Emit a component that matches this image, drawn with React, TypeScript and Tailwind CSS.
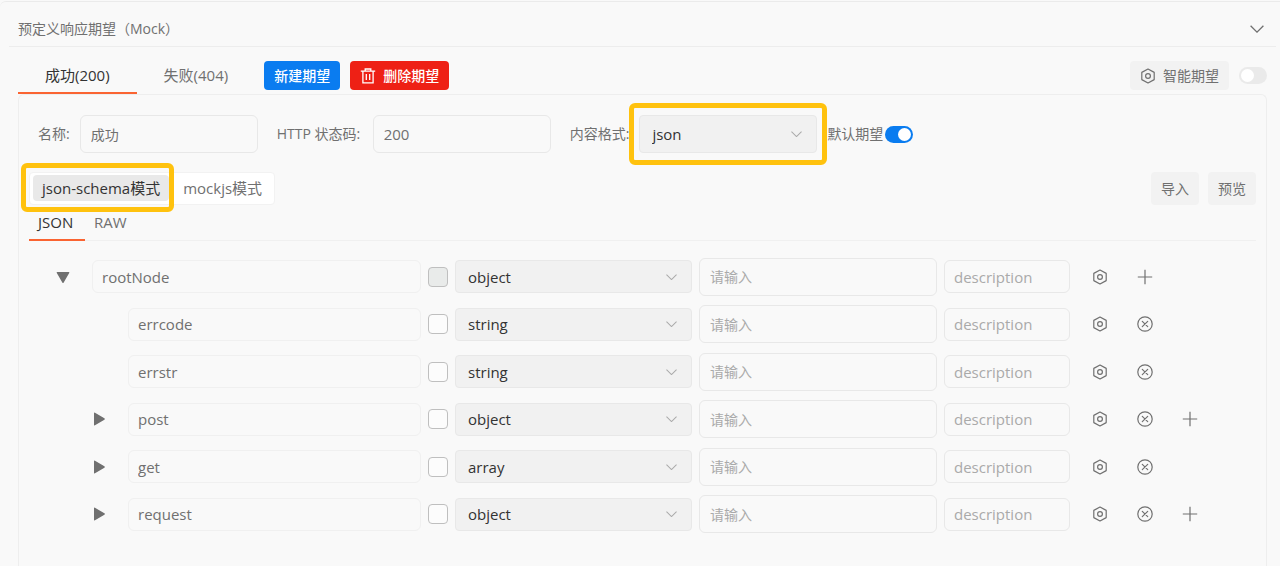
import { useState, type ReactNode } from "react";
import { clsx } from "clsx";

type SchemaNode = {
  name: string;
  type: string;
  level: 0 | 1;
  expand?: "open" | "closed";
  canRemove: boolean;
  canAdd: boolean;
};

const NODES: SchemaNode[] = [
  { name: "rootNode", type: "object", level: 0, expand: "open", canRemove: false, canAdd: true },
  { name: "errcode", type: "string", level: 1, canRemove: true, canAdd: false },
  { name: "errstr", type: "string", level: 1, canRemove: true, canAdd: false },
  { name: "post", type: "object", level: 1, expand: "closed", canRemove: true, canAdd: true },
  { name: "get", type: "array", level: 1, expand: "closed", canRemove: true, canAdd: false },
  { name: "request", type: "object", level: 1, expand: "closed", canRemove: true, canAdd: true },
];

const TYPES = ["object", "array", "string", "number", "boolean", "integer"];

function HexIcon() {
  return (
    <svg width="16" height="16" viewBox="0 0 16 16" fill="none" stroke="currentColor" strokeWidth="1.2" strokeLinejoin="round">
      <path d="M8 1 14.2 4.4V11.6L8 15 1.8 11.6V4.4Z" />
      <circle cx="8" cy="8" r="2.4" />
    </svg>
  );
}

function CloseCircleIcon() {
  return (
    <svg width="16" height="16" viewBox="0 0 16 16" fill="none" stroke="currentColor" strokeWidth="1.2" strokeLinecap="round">
      <circle cx="8" cy="8" r="7.2" />
      <path d="M5.3 5.3 10.7 10.7M10.7 5.3 5.3 10.7" />
    </svg>
  );
}

function PlusIcon() {
  return (
    <svg width="16" height="16" viewBox="0 0 16 16" fill="none" stroke="currentColor" strokeWidth="1.2">
      <path d="M8 .8V15.2M.8 8H15.2" />
    </svg>
  );
}

function TrashIcon() {
  return (
    <svg width="16" height="16" viewBox="0 0 16 16" fill="none" stroke="currentColor" strokeWidth="1.3">
      <path d="M.8 3.2H15.2M2.9 3.2V14.9H13.1V3.2M5.2 3.2V1H10.8V3.2M6.3 6V12M9.7 6V12" />
    </svg>
  );
}

function ChevronIcon({ className }: { className?: string }) {
  return (
    <svg className={className} viewBox="0 0 14 8" fill="none" stroke="currentColor" strokeWidth="1.3">
      <path d="M.6.7 7 7.1 13.4.7" />
    </svg>
  );
}

function Triangle({ open }: { open: boolean }) {
  return (
    <svg width="14" height="14" viewBox="0 0 14 14" className={clsx("fill-current", !open && "-rotate-90")}>
      <path d="M1.3 2H12.7Q13.8 2 13.2 3L7.7 12.4Q7 13.4 6.3 12.4L.8 3Q.2 2 1.3 2Z" />
    </svg>
  );
}

function Switch({ label, defaultChecked }: { label: string; defaultChecked?: boolean }) {
  return (
    <input
      type="checkbox"
      role="switch"
      aria-label={label}
      defaultChecked={defaultChecked}
      className="h-[17px] w-7 shrink-0 appearance-none rounded-full bg-[#eaeaea] p-0.5 before:block before:size-[13px] before:rounded-full before:bg-white checked:bg-[#0a7cf0] checked:before:ml-[11px]"
    />
  );
}

function Select({ label, value, options, className }: { label: string; value: string; options: string[]; className?: string }) {
  return (
    <div className="relative">
      <select
        aria-label={label}
        defaultValue={value}
        className={clsx("w-full appearance-none rounded border border-[#e8e8e8] bg-[#f1f1f1] px-3 text-[15px] text-[#333]", className)}
      >
        {options.map((o) => (
          <option key={o}>{o}</option>
        ))}
      </select>
      <ChevronIcon className="pointer-events-none absolute inset-y-0 right-[15px] my-auto w-[11px] text-[#aaa]" />
    </div>
  );
}

function IconButton({ label, children }: { label: string; children: ReactNode }) {
  return (
    <button aria-label={label} className="flex w-[45px] items-center justify-center">
      {children}
    </button>
  );
}

function NodeRow({ node }: { node: SchemaNode }) {
  const isRoot = node.level === 0;
  return (
    <div className="grid grid-cols-[392fr_20px_237fr_238fr_126fr_179px] items-center gap-[7px]">
      <div className="flex items-center">
        <div className={clsx("flex shrink-0 justify-end pr-[22px]", isRoot ? "w-[63px]" : "w-[99px]")}>
          {node.expand && (
            <button aria-label={`toggle ${node.name}`}>
              <Triangle open={node.expand === "open"} />
            </button>
          )}
        </div>
        <input
          aria-label="name"
          defaultValue={node.name}
          className="h-[33px] min-w-0 flex-1 rounded-md border border-[#f0f0f0] px-[9px] text-[15px]"
        />
      </div>
      <input
        type="checkbox"
        aria-label="required"
        disabled={isRoot}
        className="size-5 appearance-none rounded border border-[#bfbfbf] bg-[#fcfcfc] disabled:bg-[#e9ebea]"
      />
      <Select label="type" value={node.type} options={TYPES} className="h-[33px]" />
      <input
        aria-label="mock"
        placeholder="请输入"
        className="h-[38px] w-full min-w-0 rounded-md border border-[#e8e8e8] px-[10px] placeholder:text-[#aaa]"
      />
      <input
        aria-label="description"
        placeholder="description"
        className="h-[33px] w-full min-w-0 rounded-md border border-[#e8e8e8] px-[9px] text-[15px] placeholder:text-[#aaa]"
      />
      <div className="flex">
        <IconButton label="settings">
          <HexIcon />
        </IconButton>
        {node.canRemove && (
          <IconButton label="remove">
            <CloseCircleIcon />
          </IconButton>
        )}
        {node.canAdd && (
          <IconButton label="add">
            <PlusIcon />
          </IconButton>
        )}
      </div>
    </div>
  );
}

export default function App() {
  const [tab, setTab] = useState("成功(200)");
  const [view, setView] = useState("JSON");

  return (
    <div className="flex min-h-screen flex-col bg-[#f9f9f9] pt-px font-['Open_Sans','Noto_Sans_CJK_SC',sans-serif] text-[14px] leading-[22px] text-[#707070]">
      <div className="flex flex-1 flex-col rounded-tl-md border-t border-[#ebebeb]">
        <header className="mr-1 ml-[9px] flex items-center justify-between border-b border-[#ededed] pt-4 pr-3 pb-[6px] pl-[9px]">
          <h1>预定义响应期望（Mock）</h1>
          <button aria-label="collapse">
            <ChevronIcon className="w-[14px]" />
          </button>
        </header>

        <div className="mr-[13px] ml-[18px] flex items-center pt-[10px]">
          {["成功(200)", "失败(404)"].map((t) => (
            <button
              key={t}
              onClick={() => setTab(t)}
              className={clsx(
                "h-[37px] border-b-2 px-[27px] text-[15px]",
                tab === t ? "border-[#fa6432] text-[#333]" : "border-transparent",
              )}
            >
              {t}
            </button>
          ))}
          <button className="ml-[9px] h-[29px] rounded bg-[#0a7cf0] px-[10px] font-medium text-white">新建期望</button>
          <button className="ml-[10px] flex h-[29px] items-center gap-[7px] rounded bg-[#ee2015] px-[10px] font-medium text-white">
            <TrashIcon />
            删除期望
          </button>
          <button className="ml-auto flex h-[29px] items-center gap-[7px] rounded bg-[#f2f2f2] px-[10px]">
            <HexIcon />
            智能期望
          </button>
          <div className="ml-[10px] flex">
            <Switch label="智能期望" />
          </div>
        </div>

        <section className="mr-[13px] ml-[18px] flex-1 rounded-t-md border border-b-0 border-[#eee] px-[10px] pt-5">
          <div className="flex items-center pl-[9px]">
            <label htmlFor="name">名称:</label>
            <input id="name" defaultValue="成功" className="ml-[10px] h-[38px] w-[178px] rounded-md border border-[#e8e8e8] px-[10px]" />
            <label htmlFor="status" className="ml-[19px] w-[86px]">
              HTTP 状态码:
            </label>
            <input
              id="status"
              defaultValue="200"
              className="ml-[10px] h-[38px] w-[178px] rounded-md border border-[#e8e8e8] px-[10px] text-[15px]"
            />
            <span className="ml-[19px]">内容格式:</span>
            <div className="relative ml-[10px] w-[178px]">
              <Select label="内容格式" value="json" options={["json", "xml", "html", "text"]} className="h-[38px]" />
              <div className="pointer-events-none absolute -inset-x-[10px] -inset-y-3 rounded-md border-5 border-[#ffc20e]" />
            </div>
            <div className="ml-[10px] flex items-center gap-0.5">
              <span>默认期望</span>
              <Switch label="默认期望" defaultChecked />
            </div>
          </div>

          <div className="mt-[19px] flex items-center">
            <div className="flex h-[33px] items-start rounded border border-[#f2f2f2] bg-white px-[3px] pt-0.5 text-[15px]">
              <button className="relative h-[26px] rounded bg-[#e9e9e9] px-[9px] text-[#333]">
                json-schema模式
                <span className="pointer-events-none absolute -top-3 -right-[5px] -bottom-[11px] -left-3 rounded-md border-5 border-[#ffc20e]" />
              </button>
              <button className="ml-[5px] h-[26px] px-[9px]">mockjs模式</button>
            </div>
            <button className="ml-auto h-[33px] rounded bg-[#f2f2f2] px-[10px]">导入</button>
            <button className="ml-[9px] h-[33px] rounded bg-[#f2f2f2] px-[10px]">预览</button>
          </div>

          <div className="flex border-b border-[#f0f0f0] text-[15px]">
            {["JSON", "RAW"].map((v) => (
              <button
                key={v}
                onClick={() => setView(v)}
                className={clsx(
                  "-mb-px h-9 min-w-14 border-b-2 px-[9px] text-left",
                  view === v ? "border-[#fa6432] text-[#333]" : "border-transparent",
                )}
              >
                {v}
              </button>
            ))}
          </div>

          <div className="mt-3 grid min-h-[285px] auto-rows-fr">
            {NODES.map((n) => (
              <NodeRow key={n.name} node={n} />
            ))}
          </div>
        </section>
      </div>
    </div>
  );
}
